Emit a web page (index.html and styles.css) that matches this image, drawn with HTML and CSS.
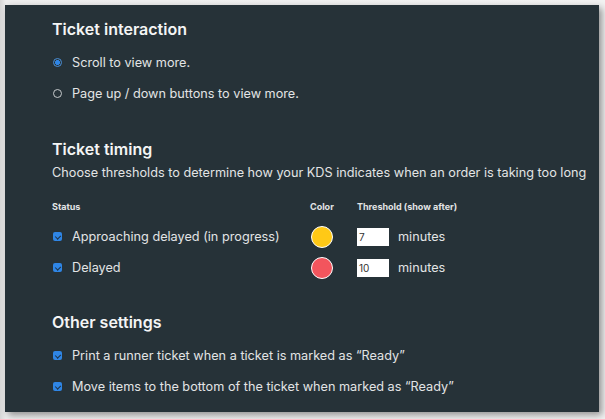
FILE: index.html
```html
<!DOCTYPE html>
<html>

<head>
    <title>KDS Settings</title>
    <link rel="stylesheet" href="styles.css">
</head>

<body>
    <div class="panel">

        <h2>Ticket interaction</h2>
        <div class="option">
            <span class="radio checked"></span>
            <span>Scroll to view more.</span>
        </div>
        <div class="option">
            <span class="radio"></span>
            <span>Page up / down buttons to view more.</span>
        </div>

        <h2 class="section">Ticket timing</h2>
        <p class="hint">Choose thresholds to determine how your KDS indicates when an order is taking too long</p>

        <div class="timing head">
            <span>Status</span>
            <span>Color</span>
            <span>Threshold (show after)</span>
        </div>
        <div class="timing">
            <div class="option">
                <span class="check"></span>
                <span>Approaching delayed (in progress)</span>
            </div>
            <span class="dot yellow"></span>
            <div class="threshold">
                <span class="box">7</span>
                <span>minutes</span>
            </div>
        </div>
        <div class="timing">
            <div class="option">
                <span class="check"></span>
                <span>Delayed</span>
            </div>
            <span class="dot red"></span>
            <div class="threshold">
                <span class="box">10</span>
                <span>minutes</span>
            </div>
        </div>

        <h2 class="section other">Other settings</h2>
        <div class="option">
            <span class="check"></span>
            <span>Print a runner ticket when a ticket is marked as “Ready”</span>
        </div>
        <div class="option">
            <span class="check"></span>
            <span>Move items to the bottom of the ticket when marked as “Ready”</span>
        </div>

    </div>
</body>

</html>
```

FILE: styles.css
```css
body {
    margin: 0;
    background: linear-gradient(to right, #d6d6d6 0, #eeeeee 6px, #f2f2f2 100%);
    font-family: "Inter", "Liberation Sans", sans-serif;
    height: 419px;
    overflow: hidden;
}

.panel {
    margin: 5px 0 0 5px;
    width: 547px;
    height: 407px;
    background: #263238;
    color: #e2e4e5;
    padding: 0 0 0 47px;
    box-shadow: 3px 3px 7px rgba(0, 0, 0, 0.4);
    font-size: 12.7px;
}

h2 {
    margin: 0;
    padding-top: 13px;
    font-size: 16px;
    font-weight: 600;
    color: #f4f5f5;
    height: 22px;
    line-height: 22px;
}

h2.section {
    padding-top: 29px;
}

h2.other {
    padding-top: 28px;
}

.option {
    display: flex;
    align-items: center;
    height: 31px;
    gap: 10px;
}

h2 + .option {
    margin-top: 7px;
}

.radio {
    width: 9px;
    height: 9px;
    margin-left: 1px;
    border-radius: 50%;
    border: 1px solid #c6cacc;
    box-sizing: border-box;
}

.radio.checked {
    border: 1px solid #4a90d9;
    background: radial-gradient(circle, #2f86e6 0, #2f86e6 2.2px, #263238 2.8px);
}

.check {
    width: 9px;
    height: 9px;
    margin-left: 1px;
    border-radius: 2px;
    background: #2f86e6;
    position: relative;
}

.check::after {
    content: "";
    position: absolute;
    left: 2.5px;
    top: 1.5px;
    width: 3px;
    height: 4px;
    border: solid #1d3347;
    border-width: 0 1.2px 1.2px 0;
    transform: rotate(45deg);
}

.hint {
    margin: 4px 0 0 0;
    line-height: 18px;
    white-space: nowrap;
}

.timing {
    display: grid;
    grid-template-columns: 258px 47px 1fr;
    align-items: center;
}

.timing.head {
    font-size: 9px;
    font-weight: 700;
    margin: 17px 0 8px 0;
    height: 14px;
}

.dot {
    width: 22px;
    height: 22px;
    border-radius: 50%;
    border: 1.5px solid #ffffff;
    box-sizing: border-box;
    margin-left: 1px;
}

.dot.yellow {
    background: #ffc916;
}

.dot.red {
    background: #f2555d;
}

.threshold {
    display: flex;
    align-items: center;
    gap: 9px;
}

.box {
    width: 32px;
    height: 18px;
    background: #ffffff;
    color: #333333;
    font-size: 10px;
    line-height: 18px;
    padding-left: 2px;
    box-sizing: border-box;
}
```
